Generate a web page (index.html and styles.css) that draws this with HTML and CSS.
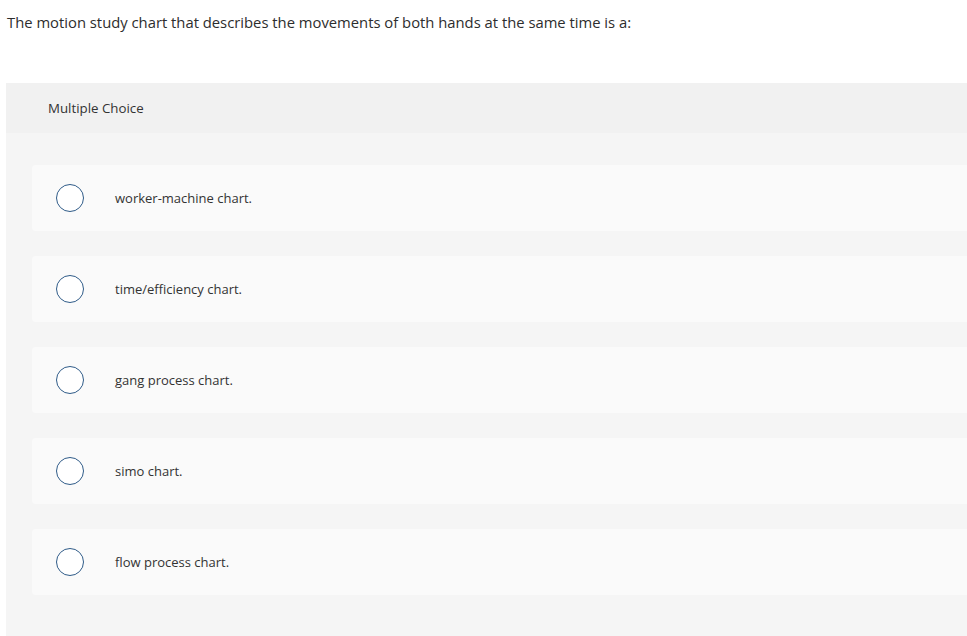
FILE: index.html
```html
<!DOCTYPE html>
<html>
<head>
<meta charset="utf-8">
<link rel="stylesheet" href="styles.css">
</head>
<body>
<div class="page">
  <p class="question">The motion study chart that describes the movements of both hands at the same time is a:</p>
  <div class="panel">
    <div class="panel-head">Multiple Choice</div>
    <div class="panel-body">
      <div class="option"><span class="radio"></span><span class="label">worker-machine chart.</span></div>
      <div class="option"><span class="radio"></span><span class="label">time/efficiency chart.</span></div>
      <div class="option"><span class="radio"></span><span class="label">gang process chart.</span></div>
      <div class="option"><span class="radio"></span><span class="label">simo chart.</span></div>
      <div class="option"><span class="radio"></span><span class="label">flow process chart.</span></div>
    </div>
  </div>
</div>
</body>
</html>
```
FILE: styles.css
```css
html, body {
  margin: 0;
  padding: 0;
  background: #fff;
  overflow: hidden;
}
body {
  font-family: "Open Sans", "Liberation Sans", sans-serif;
  color: #333;
}
.page {
  width: 1000px;
}
.question {
  margin: 0;
  padding: 12px 0 0 7px;
  height: 83px;
  box-sizing: border-box;
  font-size: 14.8px;
  line-height: 20px;
  color: #2d2d2d;
}
.panel {
  margin-left: 6px;
  background: #f5f5f5;
}
.panel-head {
  background: #f1f1f1;
  height: 50px;
  padding-left: 42px;
  display: flex;
  align-items: center;
  font-size: 13.3px;
  color: #333;
}
.panel-body {
  padding: 32px 0 60px 26px;
  display: flex;
  flex-direction: column;
  gap: 25px;
}
.option {
  height: 66px;
  background: #fafafa;
  border-radius: 4px 0 0 4px;
  display: flex;
  align-items: center;
  padding-left: 24px;
}
.radio {
  width: 26px;
  height: 26px;
  border: 1.5px solid #2f5b88;
  border-radius: 50%;
  background: #fff;
  flex: none;
}
.label {
  margin-left: 31px;
  font-size: 13px;
  color: #333;
}
```
